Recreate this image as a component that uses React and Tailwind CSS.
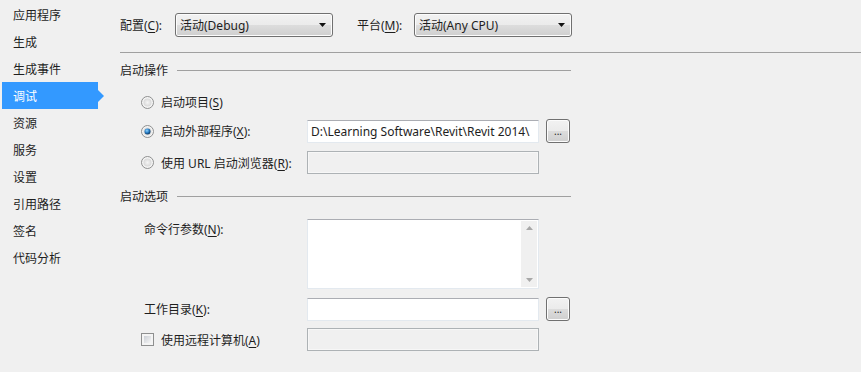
import React from "react";

const font = { fontFamily: '"Noto Sans", "Noto Sans CJK SC", sans-serif' };

const navItems = ["应用程序", "生成", "生成事件", "调试", "资源", "服务", "设置", "引用路径", "签名", "代码分析"];

const U = ({ children }) => <span className="underline underline-offset-2">{children}</span>;

const Radio = ({ checked }) => (
  <svg width="13" height="13" viewBox="0 0 13 13" className="shrink-0">
    <defs>
      <radialGradient id={checked ? "rgc" : "rgu"} cx="0.5" cy="0.5" r="0.5">
        <stop offset="0" stopColor="#f5f5f5" />
        <stop offset="1" stopColor="#d8d8d8" />
      </radialGradient>
      <radialGradient id="dot" cx="0.4" cy="0.35" r="0.6">
        <stop offset="0" stopColor="#8fd3ff" />
        <stop offset="0.6" stopColor="#2a7fc6" />
        <stop offset="1" stopColor="#0f3f6e" />
      </radialGradient>
    </defs>
    <circle cx="6.5" cy="6.5" r="6" fill="#f4f4f4" stroke="#8e8f8f" />
    <circle cx="6.5" cy="6.5" r="4" fill={`url(#${checked ? "rgc" : "rgu"})`} />
    {checked && <circle cx="6.5" cy="6.5" r="3" fill="url(#dot)" />}
  </svg>
);

const Combo = ({ text }) => (
  <div className="w-[158px] h-[24px] rounded-[3px] border border-[#707070] bg-[linear-gradient(#f2f2f2_0%,#ebebeb_50%,#dddddd_50%,#cfcfcf_100%)] flex items-center pl-[4px] pr-[6px] shadow-[inset_0_0_0_1px_#fcfcfc]">
    <span className="flex-1 text-[#1e1e1e] pt-[2px]">{text}</span>
    <svg width="7" height="4" viewBox="0 0 7 4"><path d="M0 0h7L3.5 4z" fill="#111" /></svg>
  </div>
);

const Browse = () => (
  <div className="ml-[7px] w-[24px] h-[24px] rounded-[3px] border border-[#707070] bg-[linear-gradient(#f2f2f2_0%,#ebebeb_50%,#dddddd_50%,#cfcfcf_100%)] shadow-[inset_0_0_0_1px_#fcfcfc] flex items-center justify-center text-[10px] leading-none text-[#1e1e1e] pb-[1px]">
    ...
  </div>
);

const Field = ({ children, disabled, h = "h-[23px]" }) => (
  <div
    className={`w-[232px] ${h} border ${
      disabled
        ? "border-[#adb2b5] bg-[#f0f0f0] shadow-[inset_0_0_0_1px_#f7f7f7]"
        : "border-[#e3e9ef] border-t-[#abadb3] bg-white"
    } flex items-center pl-[3px] pt-[2px] text-[#1e1e1e] overflow-hidden whitespace-nowrap`}
  >
    {children}
  </div>
);

const SectionHeader = ({ title, className }) => (
  <div className={`flex items-center h-[16px] ${className}`}>
    <span className="text-[#1e1e1e] pt-[2px]">{title}</span>
    <div className="ml-[9px] w-[394px] h-px bg-[#a0a0a0]" />
  </div>
);

export default function App() {
  return (
    <div className="w-[861px] h-[372px] bg-[#f0f0f0] flex text-[12px] leading-[16px] text-[#1e1e1e] overflow-hidden" style={font}>
      <div className="w-[110px] shrink-0 flex flex-col pt-px">
        {navItems.map((item) => {
          const active = item === "调试";
          return (
            <div key={item} className="h-[27px] flex items-center relative">
              {active ? (
                <div className="ml-[2px] w-[96px] h-[27px] bg-[#3399ff] text-white flex items-center pl-[11px] pt-[2px] relative">
                  {item}
                  <div className="absolute right-[-6px] top-[8px] w-0 h-0 border-y-[6px] border-y-transparent border-l-[6px] border-l-[#3399ff]" />
                </div>
              ) : (
                <span className="pl-[13px] pt-[2px]">{item}</span>
              )}
            </div>
          );
        })}
      </div>

      <div className="flex-1 flex flex-col pl-[10px]">
        <div className="mt-[13px] flex items-center h-[24px]">
          <span className="w-[55px] pt-[2px]">配置(<U>C</U>):</span>
          <Combo text="活动(Debug)" />
          <span className="ml-[24px] w-[57px] pt-[2px]">平台(<U>M</U>):</span>
          <Combo text="活动(Any CPU)" />
        </div>

        <div className="mt-[15px] h-px bg-[#a0a0a0]" />

        <SectionHeader title="启动操作" className="mt-[9px]" />

        <div className="mt-[14px] h-[20px] flex items-center pl-[21px] gap-[7px]">
          <Radio />
          <span className="pt-[2px]">启动项目(<U>S</U>)</span>
        </div>

        <div className="mt-[7px] h-[24px] flex items-center">
          <div className="w-[187px] flex items-center pl-[21px] gap-[7px]">
            <Radio checked />
            <span className="pt-[2px]">启动外部程序(<U>X</U>):</span>
          </div>
          <Field>D:\Learning Software\Revit\Revit 2014\</Field>
          <Browse />
        </div>

        <div className="mt-[8px] h-[23px] flex items-center">
          <div className="w-[187px] flex items-center pl-[21px] gap-[7px]">
            <Radio />
            <span className="whitespace-nowrap pt-[2px]">使用 URL 启动浏览器(<U>R</U>):</span>
          </div>
          <Field disabled />
        </div>

        <SectionHeader title="启动选项" className="mt-[14px]" />

        <div className="mt-[15px] flex items-start">
          <span className="w-[187px] pl-[24px] mt-[3px]">命令行参数(<U>N</U>):</span>
          <div className="w-[232px] h-[70px] border border-[#e3e9ef] border-t-[#abadb3] bg-white flex justify-end p-px">
            <div className="w-[16px] h-full bg-[#f0f0f0] flex flex-col items-center justify-between py-[5px]">
              <svg width="7" height="4" viewBox="0 0 7 4"><path d="M0 4h7L3.5 0z" fill="#a8a8a8" /></svg>
              <svg width="7" height="4" viewBox="0 0 7 4"><path d="M0 0h7L3.5 4z" fill="#a8a8a8" /></svg>
            </div>
          </div>
        </div>

        <div className="mt-[8px] h-[24px] flex items-center">
          <span className="w-[187px] pl-[24px] pt-[2px]">工作目录(<U>K</U>):</span>
          <Field />
          <Browse />
        </div>

        <div className="mt-[7px] h-[23px] flex items-center">
          <div className="w-[187px] flex items-center pl-[21px] gap-[7px]">
            <div className="w-[13px] h-[13px] border border-[#8e8f8f] bg-[#f4f4f4] p-[2px]">
              <div className="w-full h-full bg-[linear-gradient(135deg,#cbcfd5,#f6f6f6)]" />
            </div>
            <span className="pt-[2px]">使用远程计算机(<U>A</U>)</span>
          </div>
          <Field disabled />
        </div>
      </div>
    </div>
  );
}
